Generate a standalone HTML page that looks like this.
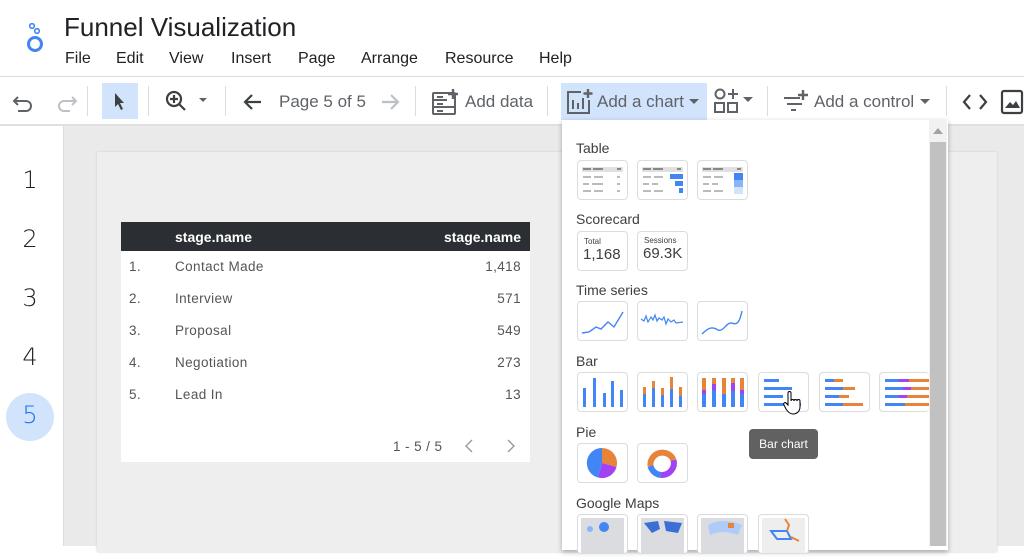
<!DOCTYPE html>
<html><head><style>
*{box-sizing:border-box;margin:0;padding:0}
body{width:1024px;height:546px;overflow:hidden;background:#fff;font-family:"Liberation Sans",Arial,sans-serif;position:relative;color:#3c4043}
.a{position:absolute}
.title{left:64px;top:12px;font-size:26px;color:#202124}
.menu{top:50px;font-size:16px;color:#202124}
.tb{top:92px;font-size:17px;color:#5f6368}
.sep{width:1px;height:30px;background:#dadce0;top:86px}
.pn{left:0;width:60px;text-align:center;font-size:24px;color:#202124;font-family:"DejaVu Sans",sans-serif;font-weight:200}
.row{font-size:13.5px;color:#555;font-family:"Liberation Sans",sans-serif;letter-spacing:0.4px}
.num{right:503px;text-align:right}
.card{position:absolute;width:51px;height:40px;border:1px solid #dadce0;border-radius:4px;background:#fff}
.lab{left:576px;font-size:14px;color:#3c4043}
</style></head><body>
<svg class="a" style="left:22px;top:22px" width="26" height="34" viewBox="0 0 26 34"><circle cx="10" cy="4" r="2.3" fill="none" stroke="#4285f4" stroke-width="1.6"/><circle cx="15" cy="9" r="2.3" fill="none" stroke="#4285f4" stroke-width="1.6"/><circle cx="13" cy="22" r="6.5" fill="none" stroke="#4285f4" stroke-width="3"/></svg>
<div class="a title">Funnel Visualization</div>
<div class="a menu" style="left:65px">File</div><div class="a menu" style="left:116px">Edit</div><div class="a menu" style="left:169px">View</div><div class="a menu" style="left:231px">Insert</div><div class="a menu" style="left:298px">Page</div><div class="a menu" style="left:361px">Arrange</div><div class="a menu" style="left:445px">Resource</div><div class="a menu" style="left:539px">Help</div>
<div class="a" style="left:0;top:76px;width:1024px;height:1px;background:#dadce0"></div>
<div class="a" style="left:0;top:124px;width:1024px;height:2px;background:#e0e0e0"></div>
<svg class="a" style="left:12px;top:90px" width="66" height="24" viewBox="0 0 66 24" fill="none" stroke-width="2"><path d="M6 7 L2 11 L6 15 M2 11 H14 a5 5 0 0 1 0 10 H6" stroke="#5f6368"/><path d="M60 7 L64 11 L60 15 M64 11 H52 a5 5 0 0 0 0 10 H58" stroke="#bdc1c6"/></svg>
<div class="a sep" style="left:87px"></div>
<div class="a" style="left:102px;top:83px;width:36px;height:36px;background:#d2e3fc"></div>
<svg class="a" style="left:111px;top:91px" width="18" height="20" viewBox="0 0 18 20"><path d="M4 2 L4 16 L7 13 L10 19 L12 18 L9 12 L13 12 Z" fill="#3c4043"/></svg>
<div class="a sep" style="left:148px"></div>
<svg class="a" style="left:164px;top:89px" width="48" height="24" viewBox="0 0 48 24" fill="none" stroke="#3c4043" stroke-width="2.2"><circle cx="10" cy="10" r="7"/><path d="M15 15 L21 21 M10 6 V14 M6 10 H14"/><path d="M35 9 H43 L39 13 Z" fill="#5f6368" stroke="none"/></svg>
<div class="a sep" style="left:225px"></div>
<svg class="a" style="left:241px;top:90px" width="24" height="24" viewBox="0 0 24 24" fill="none" stroke="#3c4043" stroke-width="2.2"><path d="M20 12 H4 M11 5 L4 12 L11 19"/></svg>
<div class="a tb" style="left:279px">Page 5 of 5</div>
<svg class="a" style="left:378px;top:90px" width="24" height="24" viewBox="0 0 24 24" fill="none" stroke="#bdc1c6" stroke-width="2.2"><path d="M4 12 H20 M13 5 L20 12 L13 19"/></svg>
<div class="a sep" style="left:415px"></div>
<svg class="a" style="left:431px;top:88px" width="28" height="28" viewBox="0 0 28 28" fill="none" stroke="#5f6368" stroke-width="2"><rect x="2" y="5" width="22" height="21" rx="1"/><path d="M2 12 H16 M2 19 H24 M6 9 H12 M6 16 H12 M6 23 H12"/><path d="M22 1 V11 M17 6 H27" stroke-width="2.4"/></svg>
<div class="a tb" style="left:465px">Add data</div>
<div class="a sep" style="left:547px"></div>
<div class="a" style="left:561px;top:83px;width:146px;height:37px;background:#d2e3fc"></div>
<svg class="a" style="left:565px;top:88px" width="28" height="28" viewBox="0 0 28 28" fill="none" stroke="#5f6368" stroke-width="2"><path d="M16 4 H3 V25 H24 V12"/><path d="M8 12 V21 M13 15 V21 M18 10 V21"/><path d="M23 1 V10 M18.5 5.5 H27.5" stroke-width="2.4"/></svg>
<div class="a tb" style="left:597px">Add a chart</div>
<svg class="a" style="left:689px;top:99px" width="10" height="6"><path d="M0 0 H10 L5 5 Z" fill="#5f6368"/></svg>
<svg class="a" style="left:713px;top:88px" width="56" height="26" viewBox="0 0 56 26" fill="none" stroke="#5f6368" stroke-width="2"><circle cx="7" cy="6" r="4.5"/><path d="M20 1 V11 M15 6 H25"/><rect x="2" y="15" width="9" height="9"/><rect x="15" y="15" width="9" height="9"/><path d="M30 9 H40 L35 14 Z" fill="#5f6368" stroke="none"/></svg>
<div class="a sep" style="left:767px"></div>
<svg class="a" style="left:782px;top:88px" width="28" height="26" viewBox="0 0 28 26" fill="none" stroke="#5f6368" stroke-width="2"><path d="M2 10 H18 M5 16 H20 M9 22 H14"/><path d="M21 2 V12 M16 7 H26" stroke-width="2.4"/></svg>
<div class="a tb" style="left:814px">Add a control</div>
<svg class="a" style="left:920px;top:99px" width="10" height="6"><path d="M0 0 H10 L5 5 Z" fill="#5f6368"/></svg>
<div class="a sep" style="left:946px"></div>
<svg class="a" style="left:962px;top:91px" width="26" height="22" viewBox="0 0 26 22" fill="none" stroke="#3c4043" stroke-width="2.2"><path d="M8 4 L2 11 L8 18 M18 4 L24 11 L18 18"/></svg>
<svg class="a" style="left:1000px;top:89px" width="24" height="26" viewBox="0 0 24 26" fill="none" stroke="#3c4043" stroke-width="2.2"><rect x="2" y="2" width="20" height="22" rx="2"/><path d="M5 19 L10 13 L13 16 L16 12 L20 19 Z" fill="#3c4043" stroke="none"/></svg>
<div class="a" style="left:63px;top:126px;width:1px;height:420px;background:#dadce0"></div>
<div class="a" style="left:64px;top:126px;width:960px;height:420px;background:#eaeaea"></div>
<div class="a" style="left:97px;top:152px;width:900px;height:400px;background:#eeeeef;box-shadow:0 0 2px #ccc"></div>
<div class="a pn" style="top:166px">1</div>
<div class="a pn" style="top:225px">2</div>
<div class="a pn" style="top:284px">3</div>
<div class="a pn" style="top:343px">4</div>
<div class="a" style="left:6px;top:393px;width:48px;height:48px;border-radius:50%;background:#d2e3fc"></div>
<div class="a pn" style="top:401px;color:#1a73e8">5</div>
<div class="a" style="left:121px;top:222px;width:409px;height:240px;background:#fff"></div>
<div class="a" style="left:121px;top:222px;width:409px;height:29px;background:#2b2f33"></div>
<div class="a" style="left:175px;top:229px;font-size:14px;font-weight:bold;color:#fff">stage.name</div>
<div class="a" style="right:503px;top:229px;font-size:14px;font-weight:bold;color:#fff">stage.name</div>
<div class="a row" style="left:129px;top:259px">1.</div><div class="a row" style="left:175px;top:259px">Contact Made</div><div class="a row num" style="top:259px">1,418</div>
<div class="a row" style="left:129px;top:291px">2.</div><div class="a row" style="left:175px;top:291px">Interview</div><div class="a row num" style="top:291px">571</div>
<div class="a row" style="left:129px;top:323px">3.</div><div class="a row" style="left:175px;top:323px">Proposal</div><div class="a row num" style="top:323px">549</div>
<div class="a row" style="left:129px;top:355px">4.</div><div class="a row" style="left:175px;top:355px">Negotiation</div><div class="a row num" style="top:355px">273</div>
<div class="a row" style="left:129px;top:387px">5.</div><div class="a row" style="left:175px;top:387px">Lead In</div><div class="a row num" style="top:387px">13</div>
<div class="a row" style="left:393px;top:439px">1 - 5 / 5</div>
<svg class="a" style="left:462px;top:438px" width="60" height="16" fill="none" stroke="#999" stroke-width="1.4"><path d="M10 2 L4 8 L10 14 M46 2 L52 8 L46 14"/></svg>
<div class="a" style="left:562px;top:120px;width:386px;height:430px;background:#fff;box-shadow:0 2px 5px rgba(0,0,0,.3)"></div>
<div class="a" style="left:929px;top:120px;width:18px;height:426px;background:#f1f1f1"></div>
<div class="a" style="left:930px;top:142px;width:16px;height:404px;background:#c1c1c1"></div>
<svg class="a" style="left:933px;top:128px" width="10" height="6"><path d="M0 6 L5 0 L10 6Z" fill="#a3a3a3"/></svg>
<div class="a lab" style="top:140px">Table</div>
<div class="card" style="left:577px;top:160px"><svg width="49" height="38"><rect x="4" y="6" width="41" height="5" fill="#e0e0e0"/><g fill="#888"><rect x="5" y="7" width="8" height="2"/><rect x="15" y="7" width="10" height="2"/><rect x="39" y="7" width="4" height="2"/></g><g fill="#bbb"><rect x="5" y="15" width="8" height="2"/><rect x="16" y="15" width="9" height="2"/><rect x="39" y="15" width="3" height="2"/><rect x="5" y="22" width="6" height="2"/><rect x="14" y="22" width="11" height="2"/><rect x="39" y="22" width="3" height="2"/><rect x="5" y="29" width="8" height="2"/><rect x="16" y="29" width="9" height="2"/><rect x="39" y="29" width="3" height="2"/></g></svg></div>
<div class="card" style="left:637px;top:160px"><svg width="49" height="38"><rect x="4" y="6" width="41" height="5" fill="#e0e0e0"/><g fill="#888"><rect x="5" y="7" width="8" height="2"/><rect x="15" y="7" width="10" height="2"/><rect x="39" y="7" width="4" height="2"/></g><g fill="#bbb"><rect x="5" y="15" width="8" height="2"/><rect x="16" y="15" width="9" height="2"/><rect x="5" y="22" width="6" height="2"/><rect x="14" y="22" width="6" height="2"/><rect x="5" y="29" width="8" height="2"/><rect x="16" y="29" width="9" height="2"/></g><g fill="#4285f4"><rect x="32" y="13" width="13" height="5"/><rect x="37" y="20" width="8" height="5"/><rect x="41" y="27" width="4" height="5"/></g></svg></div>
<div class="card" style="left:697px;top:160px"><svg width="49" height="38"><rect x="4" y="6" width="41" height="5" fill="#e0e0e0"/><rect x="36" y="12" width="9" height="7" fill="#4285f4"/><rect x="36" y="19" width="9" height="7" fill="#8ab4f8"/><rect x="36" y="26" width="9" height="7" fill="#d2e3fc"/><g fill="#888"><rect x="5" y="7" width="8" height="2"/><rect x="15" y="7" width="10" height="2"/><rect x="39" y="7" width="4" height="2"/></g><g fill="#bbb"><rect x="5" y="15" width="8" height="2"/><rect x="16" y="15" width="9" height="2"/><rect x="5" y="22" width="6" height="2"/><rect x="14" y="22" width="6" height="2"/><rect x="5" y="29" width="8" height="2"/><rect x="16" y="29" width="9" height="2"/></g></svg></div>
<div class="a lab" style="top:211px">Scorecard</div>
<div class="card" style="left:577px;top:231px"><div style="font-size:8px;margin:5px 0 0 6px">Total</div><div style="font-size:15px;margin-left:5px">1,168</div></div>
<div class="card" style="left:637px;top:231px"><div style="font-size:8px;margin:4px 0 0 6px">Sessions</div><div style="font-size:15px;margin-left:5px">69.3K</div></div>
<div class="a lab" style="top:282px">Time series</div>
<div class="card" style="left:577px;top:301px"><svg width="49" height="38" fill="none" stroke="#4285f4" stroke-width="1.4"><path d="M4 31 L11 30 L18 25 L23 27 L30 20 L36 25 L45 10"/></svg></div>
<div class="card" style="left:637px;top:301px"><svg width="49" height="38" fill="none" stroke="#4285f4" stroke-width="1.2"><path d="M3 17 L6 19 L8 14 L10 20 L13 15 L15 18 L17 13 L19 19 L21 16 L24 18 L26 15 L28 22 L30 17 L33 20 L36 18 L38 21 L45 20"/></svg></div>
<div class="card" style="left:697px;top:301px"><svg width="49" height="38" fill="none" stroke="#4285f4" stroke-width="1.4"><path d="M4 32 C10 26 14 24 20 28 C26 30 28 20 34 21 C40 24 42 18 44 9"/></svg></div>
<div class="a lab" style="top:353px">Bar</div>
<div class="card" style="left:577px;top:372px"><svg width="49" height="38" fill="#4285f4"><rect x="5" y="15" width="3" height="19"/><rect x="15" y="5" width="3" height="29"/><rect x="25" y="20" width="3" height="14"/><rect x="33" y="8" width="3" height="26"/><rect x="42" y="17" width="3" height="17"/></svg></div>
<div class="card" style="left:637px;top:372px"><svg width="49" height="38"><g fill="#4285f4"><rect x="5" y="21" width="3" height="13"/><rect x="14" y="15" width="3" height="19"/><rect x="23" y="22" width="3" height="12"/><rect x="32" y="16" width="3" height="18"/><rect x="41" y="23" width="3" height="11"/></g><g fill="#e8833a"><rect x="5" y="14" width="3" height="7"/><rect x="14" y="8" width="3" height="7"/><rect x="23" y="15" width="3" height="7"/><rect x="32" y="4" width="3" height="12"/><rect x="41" y="14" width="3" height="9"/></g></svg></div>
<div class="card" style="left:697px;top:372px"><svg width="49" height="38"><g fill="#4285f4"><rect x="4" y="21" width="4" height="13"/><rect x="14" y="17" width="4" height="17"/><rect x="24" y="21" width="4" height="13"/><rect x="33" y="18" width="4" height="16"/><rect x="42" y="21" width="4" height="13"/></g><g fill="#a142f4"><rect x="4" y="17" width="4" height="4"/><rect x="14" y="11" width="4" height="6"/><rect x="33" y="10" width="4" height="8"/><rect x="42" y="17" width="4" height="4"/></g><g fill="#e8833a"><rect x="4" y="5" width="4" height="12"/><rect x="14" y="5" width="4" height="6"/><rect x="24" y="5" width="4" height="16"/><rect x="33" y="5" width="4" height="5"/><rect x="42" y="5" width="4" height="12"/></g></svg></div>
<div class="card" style="left:758px;top:372px"><svg width="49" height="38" fill="#4285f4"><rect x="5" y="6" width="15" height="3"/><rect x="5" y="14" width="28" height="3"/><rect x="5" y="22" width="19" height="3"/><rect x="5" y="30" width="37" height="3"/></svg></div>
<div class="card" style="left:819px;top:372px"><svg width="49" height="38"><g fill="#4285f4"><rect x="5" y="6" width="9" height="3"/><rect x="5" y="14" width="18" height="3"/><rect x="5" y="22" width="14" height="3"/><rect x="5" y="30" width="18" height="3"/></g><g fill="#e8833a"><rect x="14" y="6" width="9" height="3"/><rect x="23" y="14" width="12" height="3"/><rect x="19" y="22" width="10" height="3"/><rect x="23" y="30" width="20" height="3"/></g></svg></div>
<div class="card" style="left:879px;top:372px;width:50px;border-right:none"><svg width="49" height="38"><g fill="#4285f4"><rect x="5" y="6" width="14" height="3"/><rect x="5" y="14" width="18" height="3"/><rect x="5" y="22" width="14" height="3"/><rect x="5" y="30" width="20" height="3"/></g><g fill="#a142f4"><rect x="19" y="6" width="10" height="3"/><rect x="23" y="14" width="8" height="3"/><rect x="19" y="22" width="8" height="3"/></g><g fill="#e8833a"><rect x="29" y="6" width="20" height="3"/><rect x="31" y="14" width="18" height="3"/><rect x="27" y="22" width="22" height="3"/><rect x="25" y="30" width="24" height="3"/></g></svg></div>
<svg class="a" style="left:783px;top:391px" width="18" height="24" viewBox="0 0 18 24"><path d="M5 2 a1.5 1.5 0 0 1 3 0 V10 a1.5 1.5 0 0 1 3 0 a1.5 1.5 0 0 1 3 0 a1.5 1.5 0 0 1 3 0 V16 C17 20 14 23 10 23 C7 23 5 21 3 18 L1 14 C0 12 2 11 3 12 L5 14 Z" fill="#fff" stroke="#000" stroke-width="1"/></svg>
<div class="a" style="left:749px;top:429px;width:69px;height:30px;background:#616161;border-radius:4px;color:#fff;font-size:12px;line-height:30px;text-align:center">Bar chart</div>
<div class="a lab" style="top:424px">Pie</div>
<div class="card" style="left:577px;top:443px"><svg width="49" height="38"><g transform="translate(24,19)"><path d="M0 0 L0 -15 A15 15 0 0 1 14.5 4 Z" fill="#e8833a"/><path d="M0 0 L14.5 4 A15 15 0 0 1 -4 14.5 Z" fill="#a142f4"/><path d="M0 0 L-4 14.5 A15 15 0 0 1 0 -15 Z" fill="#4285f4"/></g></svg></div>
<div class="card" style="left:637px;top:443px"><svg width="49" height="38" fill="none" stroke-width="6"><g transform="translate(24,19)"><path d="M-11.5 3 A12 12 0 0 1 11.5 -3" stroke="#e8833a"/><path d="M11.5 -3 A12 12 0 0 1 -1 12" stroke="#a142f4"/><path d="M-1 12 A12 12 0 0 1 -11.5 3" stroke="#4285f4"/></g></svg></div>
<div class="a lab" style="top:495px">Google Maps</div>
<div class="card" style="left:577px;top:514px"><svg width="49" height="38"><rect x="3" y="3" width="43" height="35" fill="#dadce0"/><circle cx="26" cy="12" r="5" fill="#4285f4"/><circle cx="12" cy="14" r="3" fill="#8ab4f8"/></svg></div>
<div class="card" style="left:637px;top:514px"><svg width="49" height="38"><rect x="3" y="3" width="43" height="35" fill="#dadce0"/><path d="M6 8 L20 6 L22 14 L14 18 Z M26 6 L44 8 L40 18 L28 16Z" fill="#3b6fd4"/></svg></div>
<div class="card" style="left:697px;top:514px"><svg width="49" height="38"><rect x="3" y="3" width="43" height="35" fill="#dadce0"/><path d="M10 10 Q25 2 44 10 L40 20 Q25 14 12 20Z" fill="#aecbfa"/><rect x="30" y="8" width="6" height="5" fill="#e8833a"/></svg></div>
<div class="card" style="left:758px;top:514px"><svg width="49" height="38" fill="none" stroke-width="2"><rect x="3" y="3" width="43" height="35" fill="#eee" stroke="none"/><path d="M12 16 H28 L32 24 H18Z" stroke="#4285f4"/><path d="M26 4 L30 10 L28 16 M32 22 L40 26" stroke="#e8833a"/></svg></div>
</body></html>
